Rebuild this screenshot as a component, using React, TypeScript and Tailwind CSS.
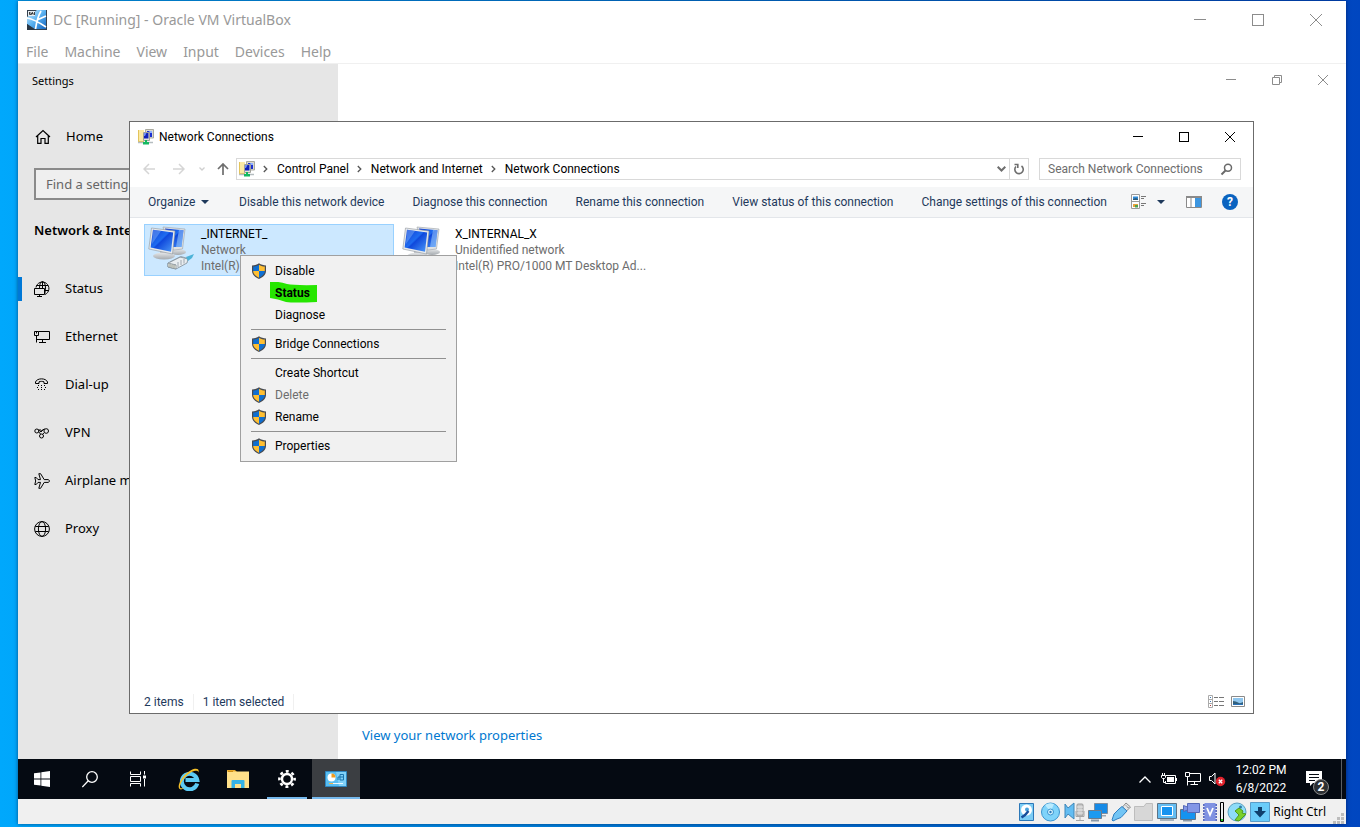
import type { ReactNode } from 'react';

const sidebarItems = [
  { name: 'Status', icon: <StatusIcon />, active: true },
  { name: 'Ethernet', icon: <EthernetIcon /> },
  { name: 'Dial-up', icon: <DialupIcon /> },
  { name: 'VPN', icon: <VpnIcon /> },
  { name: 'Airplane mode', icon: <AirplaneIcon /> },
  { name: 'Proxy', icon: <GlobeIcon /> },
];

const commands = [
  'Disable this network device',
  'Diagnose this connection',
  'Rename this connection',
  'View status of this connection',
  'Change settings of this connection',
];

type MenuEntry = { label: string; shield?: boolean; marked?: boolean; disabled?: boolean };

const menuGroups: MenuEntry[][] = [
  [{ label: 'Disable', shield: true }, { label: 'Status', marked: true }, { label: 'Diagnose' }],
  [{ label: 'Bridge Connections', shield: true }],
  [
    { label: 'Create Shortcut' },
    { label: 'Delete', shield: true, disabled: true },
    { label: 'Rename', shield: true },
  ],
  [{ label: 'Properties', shield: true }],
];

/* ---------- icons ---------- */

function VmLogo() {
  return (
    <svg width="20" height="20" viewBox="0 0 20 20">
      <defs>
        <linearGradient id="vm" x1="0" y1="0" x2="1" y2="1">
          <stop offset="0" stopColor="#d5effc" />
          <stop offset="0.5" stopColor="#58b0f0" />
          <stop offset="1" stopColor="#1566c0" />
        </linearGradient>
      </defs>
      <rect width="20" height="20" fill="#33404e" />
      <path d="M0 7 L10 0 H19 V13 L19 19 H8 L0 14Z" fill="url(#vm)" />
      <path d="M0 14 L8 20 H0Z" fill="#2a3644" />
      <path d="M1 1h7v5H1z" fill="#e8eef2" />
      <path d="M2.500 2 V4.500 H4.500 V3 H2.500 M5.500 2 V4 H7.500 M7.500 2 V5" stroke="#222" fill="none" strokeWidth=".8" />
      <path d="M14 1 C11 6 9.500 12 8.500 19 M0 8 C6 9 10 11 19 17 M10 10 L19 6" stroke="#fff" strokeWidth="1.700" fill="none" />
    </svg>
  );
}

function HomeIcon() {
  return (
    <svg width="16" height="16" viewBox="0 0 16 16" fill="none" stroke="#000" strokeWidth="1.200">
      <path d="M1 8 L8 1.500 L15 8 M2.700 6.700 V14.400 H6 V9.500 H10 V14.400 H13.300 V6.700" />
    </svg>
  );
}

function StatusIcon() {
  return (
    <svg width="16" height="16" viewBox="0 0 16 16" fill="none" stroke="#000">
      <path d="M2 6.500 A6.500 6.500 0 1 1 11 13.500 M2.500 4.500 H14 M10.500 9.500 H14.500 M5.500 7.500 C5.500 3.500 6.500 .8 8.500 .6 C10.500 .8 11.500 4 11.500 7 C11.500 9.500 11.200 11.500 10.500 13 M8.500 .5 V7" />
      <path d="M.5 7.500 H10.500 V13.500 H.5Z M5.500 13.500 V15.500 M3 15.500 H8" />
    </svg>
  );
}

function EthernetIcon() {
  return (
    <svg width="16" height="16" viewBox="0 0 16 16" fill="none" stroke="#000">
      <path d="M4.500 2.500 H15.500 V10.500 H2.500 M2.500 6 V13.500 M8.500 10.500 V13.500 M5 13.500 H12" />
      <path d="M.5 2.500 H4.500 V6.500 H.5Z M2.500 2.500 V4.500" />
    </svg>
  );
}

function DialupIcon() {
  return (
    <svg width="16" height="16" viewBox="0 0 16 16" fill="none" stroke="#000">
      <path d="M1.500 6.500 V5 C3 .8 12 .8 13.500 5 V6.500 H10 V4.800 C8.500 4.200 6.500 4.200 5 4.800 V6.500Z" />
      <path d="M4 8.500h1M7 8.500h1M10 8.500h1M3 10.500h1M7 10.500h1M11 10.500h1M4 12.500h1M7 12.500h1M10 12.500h1" />
    </svg>
  );
}

function VpnIcon() {
  return (
    <svg width="16" height="16" viewBox="0 0 16 16" fill="none" stroke="#000">
      <circle cx="2.800" cy="6" r="2" />
      <circle cx="12.200" cy="6" r="2.300" />
      <circle cx="7.500" cy="11" r="2" />
      <path d="M4.500 4.800 L7 7 L9 4.500 M4.800 7 L6.500 9 M10 7.800 L8.700 9.300 M5.500 4 L7.500 6 L10.500 3.800" />
    </svg>
  );
}

function AirplaneIcon() {
  return (
    <svg width="16" height="16" viewBox="0 0 16 16" fill="none" stroke="#000" strokeLinejoin="round">
      <path d="M.8 4.500 H2.200 L4 6.600 H6.500 L4.800 .7 H6.600 L10.200 6.600 H14 C16 7.200 16 8.800 14 9.400 H10.200 L6.600 15.300 H4.800 L6.500 9.400 H4 L2.200 11.500 H.8 L1.700 8Z" />
    </svg>
  );
}

function GlobeIcon() {
  return (
    <svg width="16" height="16" viewBox="0 0 16 16" fill="none" stroke="#000">
      <circle cx="8" cy="8" r="7.400" />
      <ellipse cx="8" cy="8" rx="3.600" ry="7.400" />
      <path d="M1.300 5.500 H14.700 M1.300 10.500 H14.700" />
    </svg>
  );
}

function NetworkFolderIcon() {
  return (
    <svg width="16" height="16" viewBox="0 0 16 16" className="shrink-0">
      <path d="M0 1 H6 V13 H0Z" fill="#e3c45c" />
      <path d="M1 1 H6 V12 H1Z" fill="#fbeaa4" />
      <path d="M7.500 .5 H15.500 V9 H7.500Z" fill="#d9d9d2" stroke="#a9a99f" />
      <path d="M9 2 H14 V8 H9Z" fill="#1b2fd0" />
      <path d="M11 2 H14 V4 H12Z" fill="#8fb0ff" />
      <path d="M5.500 3.500 H11.500 V11.500 H5.500Z" fill="#e4e4dc" stroke="#a0a098" />
      <path d="M6 4 H10.500 V9.500 H6Z" fill="#1020b8" />
      <path d="M6 4 H8.500 L7 7 H6Z" fill="#6f8ff5" />
      <path d="M0 13.500 H15" stroke="#b5bdc0" strokeWidth="1.500" />
      <path d="M7 11 H9 V13 H11 V15.500 H5 V13 H7Z" fill="#14b860" />
    </svg>
  );
}

function Shield() {
  return (
    <svg width="16" height="16" viewBox="0 0 16 16">
      <path d="M8 .3 C10 1.800 12.500 2.400 15 2.400 V8 C15 11.500 12 14.500 8 15.900 C4 14.500 1 11.500 1 8 V2.400 C3.500 2.400 6 1.800 8 .3Z" fill="#474b52" />
      <path d="M8 1.800 V8 H2.200 V3.600 C4.500 3.500 6.500 2.900 8 1.800Z" fill="#0f6fd1" />
      <path d="M8 1.800 V8 H13.800 V3.600 C11.500 3.500 9.500 2.900 8 1.800Z" fill="#ffbf32" />
      <path d="M8 8 H2.200 C2.200 11 5 13.500 8 14.700Z" fill="#ffbf32" />
      <path d="M8 8 H13.800 C13.800 11 11 13.500 8 14.700Z" fill="#0f6fd1" />
    </svg>
  );
}

function Computers({ plug }: { plug?: boolean }) {
  return (
    <svg width="48" height="48" viewBox="0 0 48 48" className="shrink-0">
      <defs>
        <linearGradient id="scr" x1="0" y1="0" x2="1" y2="1">
          <stop offset="0" stopColor="#1038d0" />
          <stop offset="0.450" stopColor="#1e6cf0" />
          <stop offset="0.500" stopColor="#0f48dc" />
          <stop offset="1" stopColor="#4c9af8" />
        </linearGradient>
        <linearGradient id="base" x1="0" y1="0" x2="0" y2="1">
          <stop offset="0" stopColor="#e6e8ea" />
          <stop offset="1" stopColor="#a4a9ae" />
        </linearGradient>
      </defs>
      <ellipse cx="30" cy="27" rx="8" ry="3" fill="url(#base)" />
      <path d="M15 2 L37 4 L34.500 24 L26 25 L20 23Z" fill="#dfe2e4" stroke="#9aa1a7" strokeWidth=".6" />
      <path d="M17 3.500 L35.500 5.200 L33.500 22 L22 22Z" fill="url(#scr)" />
      <path d="M31 4.800 L35.500 5.200 L33.500 22 L28 22Z" fill="#8fc0fa" opacity=".6" />
      <path d="M12 25 H21 L22 30 H12Z" fill="#b4b9be" />
      <ellipse cx="16" cy="31" rx="11" ry="3.500" fill="url(#base)" />
      <path d="M3.500 3 L27 6 L24.500 29 L.8 24Z" fill="#e8eaec" stroke="#8f969c" strokeWidth=".6" />
      <path d="M5 4.800 L25.200 7.500 L23 26.800 L2.600 22.500Z" fill="url(#scr)" />
      <path d="M5 4.800 L13 5.900 L4 19Z" fill="#7fb4fb" opacity=".45" />
      {plug && (
        <g>
          <path d="M20 38 L32 32 L40 34 L39 38 L28 44 L20 42Z" fill="#e9edf0" stroke="#7e8a94" strokeWidth=".8" />
          <path d="M22 37 L33 31.500 L40 33.500 M24 43 V39 M27 43 V39 M30 42 L30 37 M33 40 V35 M36 38.500 V34" stroke="#8c98a1" fill="none" strokeWidth=".8" />
          <path d="M38 32 L46 29 L44 33 L40 36Z" fill="#4db3d8" />
          <path d="M20 38 L28 40 V44 L20 42Z" fill="#f6f3e2" stroke="#7e8a94" strokeWidth=".8" />
          <path d="M22 39 V42 M24 39.500 V42.500 M26 40 V43" stroke="#6a7680" strokeWidth=".8" />
        </g>
      )}
    </svg>
  );
}

function WinButton({ label, dark, size, children }: { label: string; dark?: boolean; size: 'sm' | 'lg'; children: ReactNode }) {
  return (
    <button
      aria-label={label}
      className={`flex h-full items-center justify-center ${size === 'lg' ? 'w-[58px]' : 'w-[46px]'} ${dark ? 'text-black' : 'text-[#8c8c8c]'}`}
    >
      {children}
    </button>
  );
}

function WinControls({ size, dark, restore }: { size: 'sm' | 'lg'; dark?: boolean; restore?: boolean }) {
  const px = size === 'lg' ? 12 : 10;
  return (
    <div className="flex h-full">
      <WinButton label="Minimize" size={size} dark={dark}>
        <svg width={px} height={px} viewBox={`0 0 ${px} ${px}`} stroke="currentColor">
          <path d={`M0 ${px / 2 - 0.5} H${px}`} />
        </svg>
      </WinButton>
      <WinButton label={restore ? 'Restore' : 'Maximize'} size={size} dark={dark}>
        <svg width={px} height={px} viewBox={`0 0 ${px} ${px}`} stroke="currentColor" fill="none">
          {restore ? (
            <path d="M.5 2.500 H7.500 V9.500 H.5Z M2.500 2.500 V.5 H9.500 V7.500 H7.500" />
          ) : (
            <rect x=".5" y=".5" width={px - 1} height={px - 1} />
          )}
        </svg>
      </WinButton>
      <WinButton label="Close" size={size} dark={dark}>
        <svg width={px} height={px} viewBox={`0 0 ${px} ${px}`} stroke="currentColor">
          <path d={`M0 0 L${px} ${px} M${px} 0 L0 ${px}`} />
        </svg>
      </WinButton>
    </div>
  );
}

function Crumb({ children }: { children: ReactNode }) {
  return (
    <>
      <svg width="5" height="8" viewBox="0 0 5 8" fill="none" stroke="#555" strokeWidth="1.300" className="mr-[9px] ml-2 shrink-0">
        <path d="M.8 1 L3.800 4 L.8 7" />
      </svg>
      <button className="whitespace-nowrap">{children}</button>
    </>
  );
}

/* ---------- settings app ---------- */

function SettingsApp() {
  return (
    <div className="flex h-full font-['Noto_Sans',sans-serif] text-[13px] text-black">
      <aside className="flex w-80 shrink-0 flex-col bg-[#e6e6e6]">
        <div className="flex h-[34px] items-center pl-[14px] text-[11px]">Settings</div>
        <button className="mt-[15px] flex h-12 items-center gap-[15px] pl-[17px]">
          <HomeIcon />
          Home
        </button>
        <input
          aria-label="Find a setting"
          placeholder="Find a setting"
          className="mx-4 mt-[7px] h-8 border-2 border-[#8a8a8a] bg-[#efefef] px-[10px] placeholder:text-[#666]"
        />
        <h2 className="mt-[14px] pl-4 leading-8 font-semibold">Network &amp; Internet</h2>
        <nav className="mt-[19px] flex flex-col">
          {sidebarItems.map((item) => (
            <a key={item.name} href="#" className="flex h-12 items-center">
              <span className={`h-6 w-1 ${item.active ? 'bg-[#0078d7]' : ''}`} />
              <span className="mr-[15px] ml-3">{item.icon}</span>
              {item.name}
            </a>
          ))}
        </nav>
      </aside>
      <main className="flex flex-1 flex-col justify-between bg-white">
        <div className="flex h-8 justify-end">
          <WinControls size="sm" restore />
        </div>
        <a href="#" className="mb-[14px] ml-6 self-start leading-5 text-[#0078d0]">
          View your network properties
        </a>
      </main>
    </div>
  );
}

/* ---------- network connections window ---------- */

function ContextMenu() {
  return (
    <div role="menu" className="absolute top-[133px] left-[110px] w-[217px] border border-[#a0a0a0] bg-[#f1f1f1] py-1">
      {menuGroups.map((group, i) => (
        <div key={i}>
          {i > 0 && <hr className="mx-[10px] my-[3px] border-[#919191]" />}
          {group.map((entry) => (
            <button
              key={entry.label}
              role="menuitem"
              disabled={entry.disabled}
              className={`flex h-[22px] w-full items-center pl-[10px] ${entry.disabled ? 'text-[#6d6d6d]' : 'text-black'}`}
            >
              <span className="mr-2 w-4">{entry.shield && <Shield />}</span>
              {entry.marked ? (
                <span className="relative font-bold">
                  <svg width="48" height="22" viewBox="0 0 48 22" fill="#26e600" className="absolute -top-[3px] -left-[5px]">
                    <path d="M0 0 Q8 -1 17 2 Q24 3.500 47 3 V20 Q24 21 16 20 Q8 17 0 16Z" />
                  </svg>
                  <span className="relative">{entry.label}</span>
                </span>
              ) : (
                entry.label
              )}
            </button>
          ))}
        </div>
      ))}
    </div>
  );
}

function Connection({ name, lines, selected }: { name: string; lines: string[]; selected?: boolean }) {
  return (
    <button
      className={`flex h-[52px] w-[250px] border pl-[3px] text-left leading-4 ${selected ? 'border-[#99d1ff] bg-[#cce8ff]' : 'border-transparent'}`}
    >
      <Computers plug={selected} />
      <span className="ml-[5px] min-w-0 pt-px text-[#6d6d6d]">
        <span className="block text-black">{name}</span>
        {lines.map((line) => (
          <span key={line} className="block truncate">
            {line}
          </span>
        ))}
      </span>
    </button>
  );
}

function NetworkConnections() {
  return (
    <section className="absolute top-[57px] right-[92px] bottom-[45px] left-[111px] flex flex-col border border-[#6b6b6b] bg-white font-[Roboto,sans-serif] text-xs text-black">
      <header className="flex h-[29px] items-center pl-2">
        <NetworkFolderIcon />
        <h1 className="ml-[5px] flex-1">Network Connections</h1>
        <WinControls size="sm" dark />
      </header>

      <div className="flex h-9 items-center pr-3">
        <div className="flex w-[106px] items-center pl-[13px]">
          <button aria-label="Back">
            <svg width="12" height="12" viewBox="0 0 12 12" fill="none" stroke="#d5d5d5" strokeWidth="1.500">
              <path d="M12 6 H1 M6 1 L1 6 L6 11" />
            </svg>
          </button>
          <button aria-label="Forward" className="ml-[18px]">
            <svg width="12" height="12" viewBox="0 0 12 12" fill="none" stroke="#d5d5d5" strokeWidth="1.500">
              <path d="M0 6 H11 M6 1 L11 6 L6 11" />
            </svg>
          </button>
          <button aria-label="Recent locations" className="ml-[14px]">
            <svg width="6" height="4" viewBox="0 0 6 4" fill="none" stroke="#cfcfcf" strokeWidth="1.300">
              <path d="M.5 .5 L3 3 L5.500 .5" />
            </svg>
          </button>
          <button aria-label="Up" className="ml-[12px]">
            <svg width="12" height="12" viewBox="0 0 12 12" fill="none" stroke="#6e6e6e" strokeWidth="1.700">
              <path d="M6 12 V1 M1 6 L6 1 L11 6" />
            </svg>
          </button>
        </div>
        <div className="flex h-[22px] flex-1 items-center border border-[#d9d9d9] pl-[2px]">
          <NetworkFolderIcon />
          <Crumb>Control Panel</Crumb>
          <Crumb>Network and Internet</Crumb>
          <Crumb>Network Connections</Crumb>
          <button aria-label="Previous locations" className="ml-auto px-[3px]">
            <svg width="9" height="6" viewBox="0 0 9 6" fill="none" stroke="#6e6e6e" strokeWidth="2">
              <path d="M.7 .8 L4.500 4.500 L8.300 .8" />
            </svg>
          </button>
          <button aria-label="Refresh" className="flex h-full w-[19px] items-center justify-center border-l border-[#d9d9d9]">
            <svg width="12" height="12" viewBox="0 0 12 12" fill="none" stroke="#6e6e6e" strokeWidth="1.600">
              <path d="M8.500 3 A4.200 4.200 0 1 1 3 3.500 M1.500 1.500 H4.800 V5" />
            </svg>
          </button>
        </div>
        <div className="ml-[10px] flex h-[22px] w-[202px] items-center border border-[#d9d9d9] pr-[7px] pl-2">
          <input
            aria-label="Search Network Connections"
            placeholder="Search Network Connections"
            className="min-w-0 flex-1 placeholder:text-[#6d6d6d]"
          />
          <svg width="13" height="13" viewBox="0 0 13 13" fill="none" stroke="#6a6a6a">
            <circle cx="8" cy="4.800" r="3.500" strokeWidth="1.500" />
            <path d="M5.500 7.500 L1.500 11.500" strokeWidth="2" />
          </svg>
        </div>
      </div>

      <div className="flex h-[31px] items-center border-b border-[#e3e6ea] bg-[#f5f6f7] pr-[15px] pl-[18px] whitespace-nowrap text-[#1e395b]">
        <button className="flex w-[61px] items-center justify-between">
          Organize
          <svg width="8" height="4" viewBox="0 0 8 4" fill="#1e395b">
            <path d="M0 0 H8 L4 4Z" />
          </svg>
        </button>
        <div className="ml-[30px] flex gap-7">
          {commands.map((command) => (
            <button key={command}>{command}</button>
          ))}
        </div>
        <div className="ml-auto flex items-center">
          <button aria-label="Change view">
            <svg width="16" height="16" viewBox="0 0 16 16" fill="none">
              <path d="M.5 .5 H8.500 V14.500 H.5Z M.5 7.500 H8.500" stroke="#9a9a9a" fill="#fff" />
              <path d="M2 2.500 H7 V5.500 H2Z" fill="#2f8ad8" />
              <path d="M2 5 L5 4 L7 5 V6 H2Z" fill="#2d5c7c" />
              <path d="M2 10 H7 V13 H2Z" fill="#e8a33c" />
              <path d="M4 11 H7 V13.500 H4Z" fill="#4fa04f" />
              <path d="M10 2.500 H15 M10 4.500 H13 M10 9.500 H15 M10 11.500 H13" stroke="#777" />
            </svg>
          </button>
          <button aria-label="More view options" className="ml-[10px]">
            <svg width="8" height="4" viewBox="0 0 8 4" fill="#1e395b">
              <path d="M0 0 H8 L4 4Z" />
            </svg>
          </button>
          <button aria-label="Preview pane" className="ml-[21px]">
            <svg width="16" height="12" viewBox="0 0 16 12">
              <path d="M.5 .5 H15.500 V11.500 H.5Z" fill="#fff" stroke="#8a8a8a" />
              <path d="M0 0 H16 V2 H0Z M4.500 1 H5.500 V12 H4.500Z" fill="#8a8a8a" />
              <path d="M9 2 H15 V11 H9Z" fill="#3d96e0" />
            </svg>
          </button>
          <button aria-label="Help" className="ml-5 flex size-4 items-center justify-center rounded-full bg-[#0a63c0] font-bold text-white">
            ?
          </button>
        </div>
      </div>

      <div className="flex flex-1 items-start gap-1 pt-[6px] pl-[14px]">
        <Connection name="_INTERNET_" lines={['Network', 'Intel(R)']} selected />
        <Connection name="X_INTERNAL_X" lines={['Unidentified network', 'Intel(R) PRO/1000 MT Desktop Ad...']} />
      </div>

      <footer className="flex h-[23px] items-center pr-2 pl-[14px] text-[#1e395b]">
        <span className="border-r border-[#f0f0f0] pr-[9px]">2 items</span>
        <span className="border-r border-[#f0f0f0] px-[9px]">1 item selected</span>
        <button aria-label="Details view" className="ml-auto">
          <svg width="16" height="13" viewBox="0 0 16 13" fill="none" stroke="#777">
            <path d="M.5 .5 H4.500 V12.500 H.5Z M.5 4.500 H4.500 M.5 8.500 H4.500" stroke="#aaa" />
            <path d="M6 2.500h4M11 2.500h5M6 6.500h4M11 6.500h5M6 10.500h4M11 10.500h5" />
            <path d="M2 2.500h1M2 6.500h1" stroke="#3c78b4" />
            <path d="M2 10.500h1" stroke="#b43c3c" />
          </svg>
        </button>
        <button aria-label="Large icons view" className="ml-[7px]">
          <svg width="14" height="11" viewBox="0 0 14 11">
            <path d="M.5 .5 H13.500 V10.500 H.5Z" fill="#fff" stroke="#8a8a8a" />
            <path d="M2 2 H12 V9 H2Z" fill="#8fc6ee" />
            <path d="M2 5 Q5 5 7 6.500 T12 6 V9 H2Z" fill="#33607c" />
            <path d="M2 8 H12 V9 H2Z" fill="#2a72b8" />
          </svg>
        </button>
      </footer>

      <ContextMenu />
    </section>
  );
}

/* ---------- guest taskbar ---------- */

function TaskButton({ label, active, open, children }: { label: string; active?: boolean; open?: boolean; children: ReactNode }) {
  return (
    <button
      aria-label={label}
      className={`relative flex h-full w-12 items-center justify-center ${active ? 'bg-[#3b3e42]' : ''}`}
    >
      {children}
      {active && <span className="absolute inset-x-0 bottom-0 h-[2px] bg-[#76b9ed]" />}
      {open && <span className="absolute inset-x-1 bottom-0 h-[2px] bg-[#76b9ed]" />}
    </button>
  );
}

function Taskbar() {
  return (
    <div className="flex h-10 shrink-0 items-center bg-[#050a12] text-white">
      <div className="flex h-full">
        <TaskButton label="Start">
          <svg width="16" height="16" viewBox="0 0 16 16" fill="#fff">
            <path d="M0 2.300 L6.500 1.400 V7.600 H0Z M7.300 1.300 L16 0 V7.600 H7.300Z M0 8.400 H6.500 V14.600 L0 13.700Z M7.300 8.400 H16 V16 L7.300 14.700Z" />
          </svg>
        </TaskButton>
        <TaskButton label="Search">
          <svg width="16" height="17" viewBox="0 0 16 17" fill="none" stroke="#fff" strokeWidth="1.300">
            <circle cx="10" cy="6" r="5.300" />
            <path d="M6.300 9.800 L.3 16" />
          </svg>
        </TaskButton>
        <TaskButton label="Task View">
          <svg width="16" height="16" viewBox="0 0 16 16" fill="none" stroke="#fff">
            <path d="M.5 .5 V3.500 H10.500 V.5 M.5 15.500 V12.500 H10.500 V15.500 M.5 5.500 H10.500 V10.500 H.5Z M14.500 0 V3.500 M14.500 8 V15.500" />
            <path d="M13 4.500 H16 V7.500 H13Z" fill="#fff" stroke="none" />
          </svg>
        </TaskButton>
      </div>
      <div className="ml-[3px] flex h-full gap-px">
        <TaskButton label="Internet Explorer">
          <svg width="24" height="24" viewBox="0 0 24 24" fill="none">
            <path d="M20.200 16.500 A7.800 7.800 0 1 1 20.300 13 H8.500" stroke="#5ccbf5" strokeWidth="4" />
            <path d="M2.600 22 C-1 19 6 7 14 3.200 C19 .8 22.500 1.500 21.500 5.500 C21.500 3.500 18.500 3 14.500 5 C8 8.500 2 17 3.200 21 C4.500 21.800 6.500 21 8 20 C6 22 4 23 2.600 22Z" fill="#f5c02a" />
          </svg>
        </TaskButton>
        <TaskButton label="File Explorer">
          <svg width="22" height="18" viewBox="0 0 22 18">
            <path d="M0 0 H8 L10 2 H0Z" fill="#e8a92c" />
            <path d="M0 1.500 H22 V18 H0Z" fill="#ffe08a" />
            <path d="M1 1 H6 V2 H1Z" fill="#d08f14" />
            <path d="M4.500 18 V11 Q4.500 10 5.500 10 H16.500 Q17.500 10 17.500 11 V18 H14 V14 H8 V18Z" fill="#35b2e6" />
          </svg>
        </TaskButton>
        <TaskButton label="Settings" open>
          <svg width="18" height="18" viewBox="0 0 18 18" fill="none" stroke="#fff">
            <circle cx="9" cy="9" r="5" strokeWidth="2.400" />
            <circle cx="9" cy="9" r="7.600" strokeWidth="2.600" strokeDasharray="2.984 2.984" strokeDashoffset="1.492" />
          </svg>
        </TaskButton>
        <TaskButton label="Control Panel" active>
          <svg width="22" height="16" viewBox="0 0 22 16">
            <path d="M.5 .5 H21.500 V15.500 H.5Z" fill="#58bdf0" stroke="#2e86c0" />
            <path d="M11 1 H21 V15 H14Z" fill="#7fd0f7" />
            <circle cx="6.500" cy="6.500" r="4" fill="#fff" />
            <path d="M6.500 6.500 V2.500 A4 4 0 0 1 10.500 6.500Z" fill="#f29b1d" />
            <path d="M4 12.500 H8" stroke="#f5b64a" />
            <path d="M8 12.500 H18" stroke="#e9f7ff" />
            <path d="M13 9 V6 H15 M15 3.500 H18.500 V9 H15Z M15 6 H18.500" stroke="#1b74ad" fill="none" />
          </svg>
        </TaskButton>
      </div>

      <div className="ml-auto flex h-full items-center font-[Roboto,sans-serif] text-xs">
        <button aria-label="Show hidden icons" className="flex w-6 justify-center">
          <svg width="12" height="7" viewBox="0 0 12 7" fill="none" stroke="#fff" strokeWidth="1.300">
            <path d="M.5 6.500 L6 1 L11.500 6.500" />
          </svg>
        </button>
        <button aria-label="Power" className="flex w-6 justify-center">
          <svg width="16" height="12" viewBox="0 0 16 12" fill="none" stroke="#fff">
            <path d="M5 2.500 H14.500 V10.500 H4.500 V8" />
            <path d="M6 4 H13 V9 H6Z M15 5 H16 V8 H15Z" fill="#fff" stroke="none" />
            <path d="M1.500 0 V2.500 M3.500 0 V2.500 M.5 2.500 H4.500 V4.500 L3.500 5.500 H1.500 L.5 4.500Z M2.500 5.500 V9.500 H4" />
          </svg>
        </button>
        <button aria-label="Network" className="flex w-6 justify-center">
          <svg width="16" height="14" viewBox="0 0 16 14" fill="none" stroke="#fff">
            <path d="M4.500 1.500 H15.500 V9.500 H2.500 M2.500 5 V13.500 M9.500 9.500 V12.500 M5.500 12.500 H13" />
            <path d="M.5 .5 H4.500 V4.500 H.5Z" />
          </svg>
        </button>
        <button aria-label="Volume" className="flex w-6 justify-center">
          <svg width="18" height="16" viewBox="0 0 18 16" fill="none" stroke="#fff">
            <path d="M1.500 5.500 H3.500 L7 2 V13 L3.500 9.500 H1.500Z" />
            <circle cx="12.500" cy="10.500" r="4.700" fill="#e0222c" stroke="none" />
            <path d="M10.800 8.800 L14.200 12.200 M14.200 8.800 L10.800 12.200" strokeWidth="1.300" />
          </svg>
        </button>
        <time className="w-16 text-center leading-[18px]">
          12:02 PM
          <br />
          6/8/2022
        </time>
        <button aria-label="Notifications, 2 new" className="relative flex w-12 justify-center pr-[6px]">
          <svg width="18" height="16" viewBox="0 0 18 16">
            <path d="M1 0 H17 V12 H8 L5 15 V12 H1Z" fill="#fff" />
            <path d="M4 3.500 H14 M4 6.500 H14 M4 9.500 H10" stroke="#050a12" />
          </svg>
          <span className="absolute top-2 right-3 flex size-4 items-center justify-center rounded-full border border-[#8a8a8a] bg-[#2c2f33] font-bold">
            2
          </span>
        </button>
        <span className="h-full w-[5px] border-l border-[#5a5e64]" />
      </div>
    </div>
  );
}

/* ---------- virtual machine status bar ---------- */

function StatusBar() {
  return (
    <div className="flex h-[25px] shrink-0 items-center justify-end gap-[3px] bg-[#f0f0f0] pr-[2px]">
      <svg width="20" height="20" viewBox="0 0 20 20">
        <path d="M2.500 1.500 H16.500 V18.500 H2.500Z" fill="#7ccdf5" stroke="#2c78b8" />
        <circle cx="9.500" cy="8" r="5.500" fill="#fff" />
        <circle cx="10" cy="7.500" r="2" fill="#4aa3dc" />
        <path d="M4.500 15.500 L8 13 L11.500 9" stroke="#174f9c" strokeWidth="2.400" fill="none" />
      </svg>
      <svg width="21" height="20" viewBox="0 0 21 20">
        <circle cx="10.500" cy="10" r="9" fill="#7fd3fa" stroke="#3a94cf" />
        <path d="M10.500 10 L5 3 A9 9 0 0 1 14 2Z" fill="#b9ebff" />
        <circle cx="10.500" cy="10" r="3" fill="#d9f4ff" stroke="#3a94cf" />
        <circle cx="10.500" cy="10" r="1.200" fill="#2c78b8" />
      </svg>
      <svg width="21" height="20" viewBox="0 0 21 20">
        <path d="M1 2 L4 6 L10 1 V17 L4 12 L1 16Z" fill="#63bdf2" stroke="#3e86b8" />
        <rect x="13" y="2" width="6" height="12" rx="1" fill="#c8c8c8" stroke="#9c9c9c" />
        <path d="M13 5 H19 M13 8 H19 M13 11 H19" stroke="#e8e8e8" />
        <path d="M12 9 V14.500 H20 V9 M16 15 V18 M12 18.500 H20" stroke="#a6a6a6" fill="none" />
      </svg>
      <svg width="20" height="20" viewBox="0 0 20 20">
        <path d="M6.500 1.500 H19.500 V11.500 H6.500Z" fill="#158ae6" stroke="#7d8ea0" />
        <path d="M13 13 H18 V14.500 H13Z" fill="#9aa6b2" />
        <path d="M.5 8.500 H13.500 V16.500 H.5Z" fill="#1c9af0" stroke="#6c7c8c" />
        <path d="M3 17.500 H11 V19.500 H3Z" fill="#8a98a6" />
      </svg>
      <svg width="20" height="20" viewBox="0 0 20 20">
        <path d="M11.500 5 L15 1 L19.500 5 L15.500 9Z" fill="#e5e5e5" stroke="#8a8a8a" />
        <path d="M15 3.500 L16 4.500 M16.500 5 L17.500 6" stroke="#666" />
        <path d="M8 7 L11 4.500 L16 9 L10 15.500 L6 17 L2 19 L1 18 L3 12Z" fill="#72c5f5" stroke="#2f7fc0" />
      </svg>
      <svg width="20" height="20" viewBox="0 0 20 20">
        <path d="M.5 4.500 H10 L12 1.500 H18.500 V18.500 H.5Z" fill="#d7d7d7" stroke="#bdbdbd" />
      </svg>
      <svg width="20" height="20" viewBox="0 0 20 20">
        <path d="M.5 1.500 H19.500 V16.500 H.5Z" fill="#64bdf2" stroke="#5b7386" />
        <path d="M4.500 4.500 H15.500 V13.500 H4.500Z" fill="#1593f0" stroke="#fff" />
        <path d="M3 17 H17 V19 H3Z" fill="#a9b3bb" />
      </svg>
      <svg width="20" height="20" viewBox="0 0 20 20">
        <path d="M.5 7.500 H15.500 V17.500 H.5Z" fill="#1593f0" stroke="#607488" />
        <path d="M3 18 H12 V19.500 H3Z" fill="#8a98a6" />
        <path d="M7.500 1.500 H19.500 V10.500 H7.500Z" fill="#8296e6" stroke="#5468b8" />
        <path d="M3.500 3.500 L7.500 5 V8 L3.500 9.500Z" fill="#8296e6" stroke="#5468b8" />
      </svg>
      <svg width="14" height="20" viewBox="0 0 14 20">
        <path d="M1 2 V19 M13 2 V19" stroke="#5b6bbd" strokeWidth="2" strokeDasharray="2 1" />
        <path d="M1.500 1 H12.500 V19 H1.500Z" fill="#7f92e2" />
        <path d="M4 6 L7 13 L10 6" stroke="#fff" strokeWidth="1.800" fill="none" />
      </svg>
      <svg width="4" height="20" viewBox="0 0 4 20">
        <path d="M.5 .5 H3.500 V19.500 H.5Z" fill="#f0f0f0" stroke="#000" />
        <path d="M1 17 H3 V19 H1Z" fill="#23c223" />
      </svg>
      <svg width="20" height="20" viewBox="0 0 20 20">
        <circle cx="10" cy="10" r="9" fill="#8edcf8" stroke="#5b9fc0" />
        <circle cx="13.500" cy="5" r="1.500" fill="#2c7aa8" />
        <path d="M8 9 L12 6 L16 9 L15 11 L19 12 L12 19 L8 18 L12 13Z" fill="#7ad02c" stroke="#4f9a1b" />
      </svg>
      <svg width="20" height="20" viewBox="0 0 20 20">
        <path d="M.5 .5 H19.500 V19.500 H.5Z" fill="#6accf9" stroke="#5a9cc8" />
        <path d="M8 5 H12 V9 H16 L10 15.500 L4 9 H8Z" fill="#10406c" />
      </svg>
      <span className="font-['Noto_Sans',sans-serif] text-xs leading-5 text-black">Right Ctrl</span>
      <svg width="11" height="11" viewBox="0 0 11 11" fill="#bcbcbc" className="ml-1 self-end">
        <path d="M8 0h3v3h-3zM4 4h3v3h-3zM8 4h3v3h-3zM0 8h3v3h-3zM4 8h3v3h-3zM8 8h3v3h-3z" />
      </svg>
    </div>
  );
}

export default function App() {
  return (
    <div className="flex h-screen bg-linear-to-r from-[#00a8fc] via-[#0078d7] to-[#0046c0] pt-px pr-[14px] pb-[3px] pl-[18px]">
      <div className="flex min-w-0 flex-1 flex-col bg-white shadow-[0_0_4px_rgba(0,20,60,0.6)]">
        <header className="flex h-[37px] shrink-0 items-center pr-px pl-[9px] font-['Noto_Sans',sans-serif] text-sm text-[#999]">
          <VmLogo />
          <h1 className="ml-[6px] flex-1">DC [Running] - Oracle VM VirtualBox</h1>
          <WinControls size="lg" />
        </header>
        <nav className="flex h-[26px] shrink-0 items-center gap-4 border-b border-[#f0f0f0] pt-[2px] pl-2 font-['Noto_Sans',sans-serif] text-sm text-[#999]">
          {['File', 'Machine', 'View', 'Input', 'Devices', 'Help'].map((label) => (
            <button key={label}>{label}</button>
          ))}
        </nav>
        <div className="relative min-h-0 flex-1">
          <SettingsApp />
          <NetworkConnections />
        </div>
        <Taskbar />
        <StatusBar />
      </div>
    </div>
  );
}
